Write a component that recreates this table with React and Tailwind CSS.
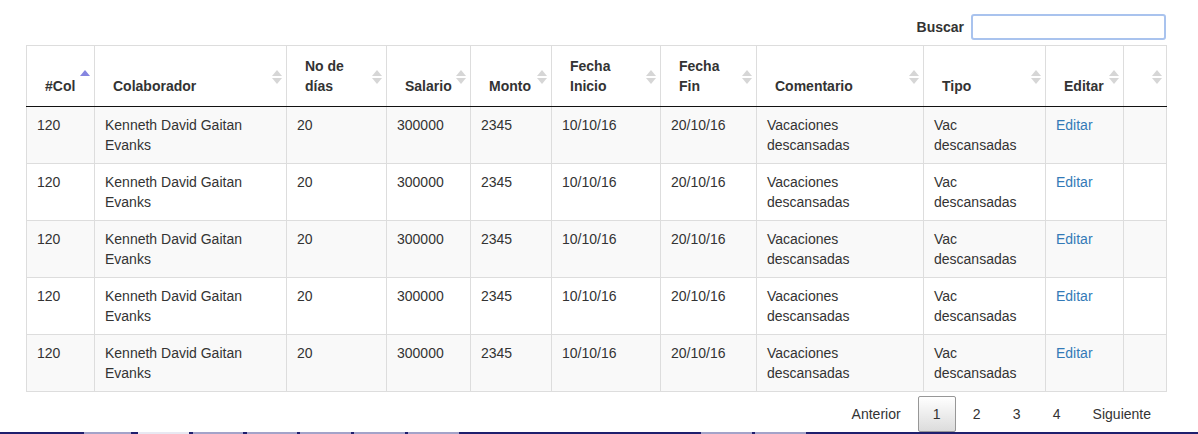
import React from "react";

const cols = [
  { label: ["#Col"], w: "w-[68px]", active: true },
  { label: ["Colaborador"], w: "w-[192px]" },
  { label: ["No de", "días"], w: "w-[100px]" },
  { label: ["Salario"], w: "w-[84px]" },
  { label: ["Monto"], w: "w-[81px]" },
  { label: ["Fecha", "Inicio"], w: "w-[109px]" },
  { label: ["Fecha", "Fin"], w: "w-[96px]" },
  { label: ["Comentario"], w: "w-[167px]" },
  { label: ["Tipo"], w: "w-[122px]" },
  { label: ["Editar"], w: "w-[78px]" },
  { label: [], w: "w-[43px]" },
];

const rows = [1, 2, 3, 4, 5];

function SortIcon({ active }) {
  return (
    <svg
      width="10"
      height="14"
      viewBox="0 0 10 14"
      className="absolute right-[4px] top-[24px]"
    >
      {active ? (
        <polygon points="0,6 5,0 10,6" fill="#8585e0" />
      ) : (
        <>
          <polygon points="0,6 5,0 10,6" fill="#d6d6d6" />
          <polygon points="0,8 5,14 10,8" fill="#d6d6d6" />
        </>
      )}
    </svg>
  );
}

function PageBtn({ children, current }) {
  return (
    <span
      className={
        "ml-[2px] min-w-[38px] px-[14px] py-[7px] leading-[20px] text-center rounded-[2px] border " +
        (current
          ? "border-[#979797] bg-gradient-to-b from-white to-[#dcdcdc] text-[#333]"
          : "border-transparent text-[#333]")
      }
    >
      {children}
    </span>
  );
}

export default function App() {
  const tabs = [
    "ml-[84px] w-[47px]",
    "ml-[7px] w-[51px] bg-[#e8e8f2]",
    "ml-[4px] w-[50px]",
    "ml-[4px] w-[50px]",
    "ml-[3px] w-[51px]",
    "ml-[3px] w-[51px]",
    "ml-[3px] w-[51px]",
    "ml-[242px] w-[51px]",
    "ml-[3px] w-[51px]",
  ];

  return (
    <div className="w-[1198px] h-[434px] overflow-hidden bg-white font-['Liberation_Sans',Arial,sans-serif] text-[14px] text-[#333]">
      <div className="ml-[26px] w-[1140px]">
        <div className="pt-[14px] flex justify-end items-center h-[40px]">
          <label className="font-bold mr-[7px]">Buscar</label>
          <input className="w-[195px] h-[26px] border-2 border-[#a9c3ee] rounded-[3px] outline-none" />
        </div>
        <table className="mt-[5px] w-[1140px] table-fixed border-collapse">
          <colgroup>
            {cols.map((c, i) => (
              <col key={i} className={c.w} />
            ))}
          </colgroup>
          <thead>
            <tr>
              {cols.map((c, i) => (
                <th
                  key={i}
                  className="relative h-[61px] border border-[#ddd] border-b-[#111] pl-[18px] pr-[10px] pt-[9px] pb-[10px] align-bottom text-left font-bold leading-[20px]"
                >
                  {c.label.map((l, j) => (
                    <div key={j}>{l}</div>
                  ))}
                  <SortIcon active={c.active} />
                </th>
              ))}
            </tr>
          </thead>
          <tbody>
            {rows.map((r) => (
              <tr key={r} className={r % 2 ? "bg-[#f9f9f9]" : "bg-white"}>
                <td className="border border-[#ddd] px-[10px] py-[8px] align-top leading-[20px]">120</td>
                <td className="border border-[#ddd] px-[10px] py-[8px] align-top leading-[20px]">
                  Kenneth David Gaitan Evanks
                </td>
                <td className="border border-[#ddd] px-[10px] py-[8px] align-top leading-[20px]">20</td>
                <td className="border border-[#ddd] px-[10px] py-[8px] align-top leading-[20px]">300000</td>
                <td className="border border-[#ddd] px-[10px] py-[8px] align-top leading-[20px]">2345</td>
                <td className="border border-[#ddd] px-[10px] py-[8px] align-top leading-[20px]">10/10/16</td>
                <td className="border border-[#ddd] px-[10px] py-[8px] align-top leading-[20px]">20/10/16</td>
                <td className="border border-[#ddd] px-[10px] py-[8px] align-top leading-[20px]">
                  Vacaciones descansadas
                </td>
                <td className="border border-[#ddd] px-[10px] py-[8px] align-top leading-[20px]">
                  Vac descansadas
                </td>
                <td className="border border-[#ddd] px-[10px] py-[8px] align-top leading-[20px]">
                  <a className="text-[#337ab7]">Editar</a>
                </td>
                <td className="border border-[#ddd] px-[10px] py-[8px] align-top leading-[20px]"></td>
              </tr>
            ))}
          </tbody>
        </table>
        <div className="pt-[4px] flex justify-end">
          <PageBtn>Anterior</PageBtn>
          <PageBtn current>1</PageBtn>
          <PageBtn>2</PageBtn>
          <PageBtn>3</PageBtn>
          <PageBtn>4</PageBtn>
          <PageBtn>Siguiente</PageBtn>
        </div>
      </div>
      <div className="h-[4px] bg-[#1f1f6e] flex items-start">
        {tabs.map((t, i) => (
          <div key={i} className={"h-[3px] bg-[#a3a3c9] " + t} />
        ))}
      </div>
    </div>
  );
}
